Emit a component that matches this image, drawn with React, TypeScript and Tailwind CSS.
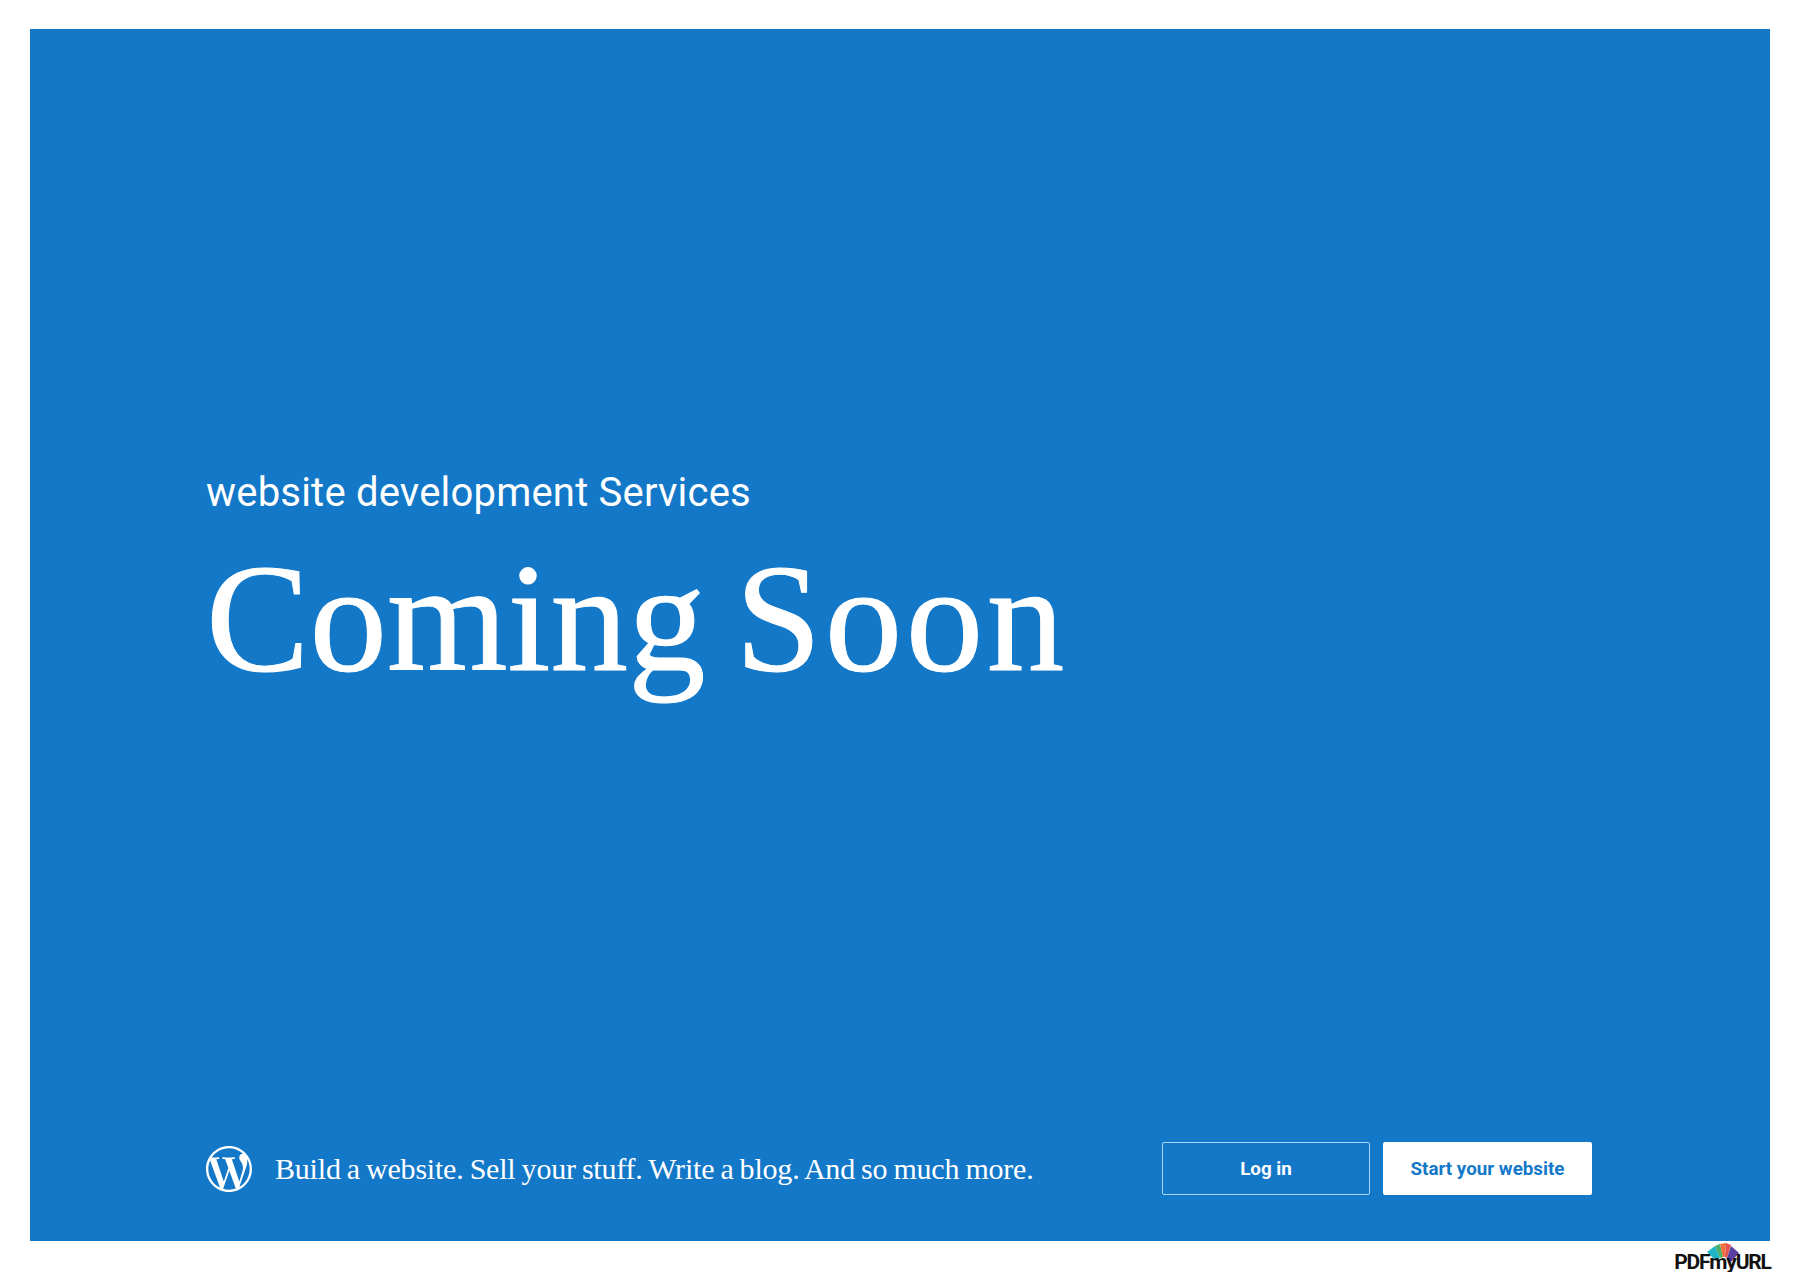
export default function App() {
  return (
    <div className="h-[1272px] overflow-hidden bg-white pt-[29px] px-[30px] font-['Roboto',sans-serif]">
      <main className="h-[1212px] bg-[#1378c8] flex flex-col pl-[176px] pr-[178px] text-white">
        <section className="flex-1 flex flex-col pt-[440px]">
          <p className="text-[40px] leading-[48px] tracking-[0.2px]">website development Services</p>
          <h1 className="mt-[16px] text-[155px] leading-[170px] font-['Liberation_Serif',serif] font-normal [word-spacing:-9px] [-webkit-text-stroke:1px_white]">
            Coming <span className="tracking-[3.4px]">Soon</span>
          </h1>
        </section>
        <footer className="flex items-center pb-[46px]">
          <WordpressLogo />
          <p className="ml-[23px] flex-1 font-['Liberation_Serif',serif] text-[30px] leading-[36px] tracking-[-0.2px] [word-spacing:-1.2px]">
            Build a website. Sell your stuff. Write a blog. And so much more.
          </p>
          <a className="w-[208px] h-[53px] pt-[1px] flex items-center justify-center rounded-[2px] border border-[#a8d4f5] text-[18.8px] font-bold">
            Log in
          </a>
          <a className="ml-[13px] w-[209px] h-[53px] pt-[1px] flex items-center justify-center rounded-[2px] bg-white text-[18.8px] font-bold text-[#1378c8]">
            Start your website
          </a>
        </footer>
      </main>
      <div className="flex justify-end">
        <PdfMyUrl />
      </div>
    </div>
  );
}

function WordpressLogo() {
  return (
    <svg width="46" height="46" viewBox="0 0 24 24" fill="#fff">
      <path d="M21.469 6.825c.84 1.537 1.318 3.3 1.318 5.175 0 3.979-2.156 7.456-5.363 9.325l3.295-9.527c.615-1.54.82-2.771.82-3.864 0-.405-.026-.78-.07-1.11m-7.981.105c.647-.03 1.232-.105 1.232-.105.582-.075.514-.93-.067-.899 0 0-1.755.135-2.88.135-1.064 0-2.85-.15-2.85-.15-.585-.03-.661.855-.075.885 0 0 .54.061 1.125.09l1.68 4.605-2.37 7.08L5.354 6.9c.649-.03 1.234-.1 1.234-.1.585-.075.516-.93-.065-.896 0 0-1.746.138-2.874.138-.2 0-.438-.008-.69-.015C4.911 3.15 8.235 1.215 12 1.215c2.809 0 5.365 1.072 7.286 2.833-.046-.003-.091-.009-.141-.009-1.06 0-1.812.923-1.812 1.914 0 .89.513 1.643 1.06 2.531.411.72.89 1.643.89 2.977 0 .915-.354 1.994-.821 3.479l-1.075 3.585-3.9-11.61.001.014zM12 22.784c-1.059 0-2.081-.153-3.048-.437l3.237-9.406 3.315 9.087c.024.053.05.101.078.149-1.12.393-2.325.609-3.582.609M1.211 12c0-1.564.336-3.05.935-4.39L7.29 21.709C3.694 19.96 1.212 16.271 1.211 12M12 0C5.385 0 0 5.385 0 12s5.385 12 12 12 12-5.385 12-12S18.615 0 12 0" />
    </svg>
  );
}

function PdfMyUrl() {
  return (
    <div className="w-[95px] flex flex-col items-center">
      <svg width="32" height="20" viewBox="0 0 32 20" className="mt-[2px] -mb-[10px]">
        <path d="M0 9 L8 3 L13 15 L9 18 Z" fill="#1fb5c4" />
        <path d="M8 3 L13 1 L16 14 L13 15 Z" fill="#4caf6a" />
        <path d="M13 1 L19 0 L18 14 L16 14 Z" fill="#f0703f" />
        <path d="M19 0 L24 2 L20 15 L18 14 Z" fill="#e3544f" />
        <path d="M24 3 L32 10 L24 19 L20 15 Z" fill="#5a3ea0" />
      </svg>
      <span className="relative text-[21px] leading-[19px] font-bold tracking-[-1.2px] whitespace-nowrap text-[#111]">PDFmyURL</span>
    </div>
  );
}
